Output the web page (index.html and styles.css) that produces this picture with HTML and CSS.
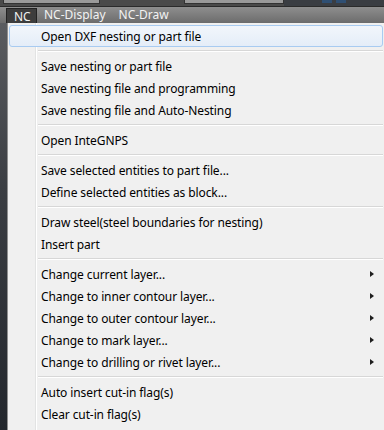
FILE: index.html
```html
<!DOCTYPE html>
<html>
<head>
<meta charset="utf-8">
<link rel="stylesheet" href="styles.css">
</head>
<body>
<div class="topstrip">
  <div class="tb-box tb-box1"></div>
  <div class="tb-box tb-box2"></div>
  <div class="tb-dark"><span class="tb-blue"></span><span class="tb-blue"></span></div>
</div>
<div class="menubar">
  <div class="mb-item active">NC</div>
  <div class="mb-item">NC-Display</div>
  <div class="mb-item">NC-Draw</div>
</div>
<div class="main">
  <div class="side"></div>
  <div class="menu">
    <div class="item hot"><span class="label">Open DXF nesting or part file</span></div>
    <div class="sep"></div>
    <div class="item"><span class="label">Save nesting or part file</span></div>
    <div class="item"><span class="label">Save nesting file and programming</span></div>
    <div class="item"><span class="label">Save nesting file and Auto-Nesting</span></div>
    <div class="sep"></div>
    <div class="item"><span class="label">Open InteGNPS</span></div>
    <div class="sep"></div>
    <div class="item"><span class="label">Save selected entities to part file...</span></div>
    <div class="item"><span class="label">Define selected entities as block...</span></div>
    <div class="sep"></div>
    <div class="item"><span class="label">Draw steel(steel boundaries for nesting)</span></div>
    <div class="item"><span class="label">Insert part</span></div>
    <div class="sep"></div>
    <div class="item sub"><span class="label">Change current layer...</span><span class="arrow"></span></div>
    <div class="item sub"><span class="label">Change to inner contour layer...</span><span class="arrow"></span></div>
    <div class="item sub"><span class="label">Change to outer contour layer...</span><span class="arrow"></span></div>
    <div class="item sub"><span class="label">Change to mark layer...</span><span class="arrow"></span></div>
    <div class="item sub"><span class="label">Change to drilling or rivet layer...</span><span class="arrow"></span></div>
    <div class="sep"></div>
    <div class="item"><span class="label">Auto insert cut-in flag(s)</span></div>
    <div class="item"><span class="label">Clear cut-in flag(s)</span></div>
  </div>
</div>
</body>
</html>
```

FILE: styles.css
```css
html, body {
  margin: 0;
  padding: 0;
}
body {
  width: 384px;
  height: 430px;
  overflow: hidden;
  background: #24282e;
  font-family: "Noto Sans", "Open Sans", sans-serif;
  font-size: 12px;
}
.topstrip {
  height: 6px;
  background: #4a4a4a;
  display: flex;
  border-bottom: 1px solid #2a2a2a;
}
.tb-box {
  height: 3px;
  border: 1px solid #333;
  border-top: none;
  background: #9a9a9a;
}
.tb-box1 { width: 95px; margin-left: 3px; }
.tb-box2 { width: 98px; margin-left: 84px; }
.tb-dark {
  flex: 1;
  background: #3a3d42;
  display: flex;
  gap: 4px;
  padding-left: 38px;
}
.tb-blue {
  width: 10px;
  height: 3px;
  background: #2f4f73;
}
.menubar {
  height: 16px;
  background: linear-gradient(#8e8e8e, #6c6c6c);
  display: flex;
  align-items: stretch;
  padding-left: 6px;
}
.mb-item {
  color: #f2f2f2;
  padding: 0 7px;
  line-height: 16px;
}
.mb-item:last-child { padding-left: 6px; }
.mb-item.active {
  width: 16px;
  padding: 0 6px 0 7px;
  background: #3d3d3d;
  border: 1px solid #222;
  border-bottom: none;
  line-height: 15px;
  margin-top: 1px;
}
.main {
  display: flex;
  height: 407px;
}
.side {
  width: 7px;
  background: linear-gradient(#5a5c60, #3b3e43 40%, #23272d);
}
.menu {
  flex: 1;
  background: #f0f0f0;
  border-left: 1px solid #8f8f8f;
  padding: 2px 1px 0 1px;
  background-image: linear-gradient(to right, transparent 27px, #e2e3e3 27px, #e2e3e3 28px, #ffffff 28px, #ffffff 29px, transparent 29px);
}
.item {
  height: 22px;
  display: flex;
  align-items: center;
  position: relative;
  color: #000;
  border: 1px solid transparent;
  box-sizing: border-box;
}
.item.hot {
  background: linear-gradient(#f2f6fb, #e4edf8);
  border: 1px solid #a8cbf1;
  border-radius: 3px;
}
.label {
  padding-left: 31px;
  white-space: nowrap;
  letter-spacing: -0.1px;
}
.arrow {
  position: absolute;
  right: 8px;
  top: 7px;
  width: 0;
  height: 0;
  border-top: 3.5px solid transparent;
  border-bottom: 3.5px solid transparent;
  border-left: 4px solid #1e1e1e;
}
.sep {
  height: 8px;
  margin-left: 29px;
  background: linear-gradient(transparent 3px, #d7d7d7 3px, #d7d7d7 4px, #ffffff 4px, #ffffff 5px, transparent 5px);
}
```
